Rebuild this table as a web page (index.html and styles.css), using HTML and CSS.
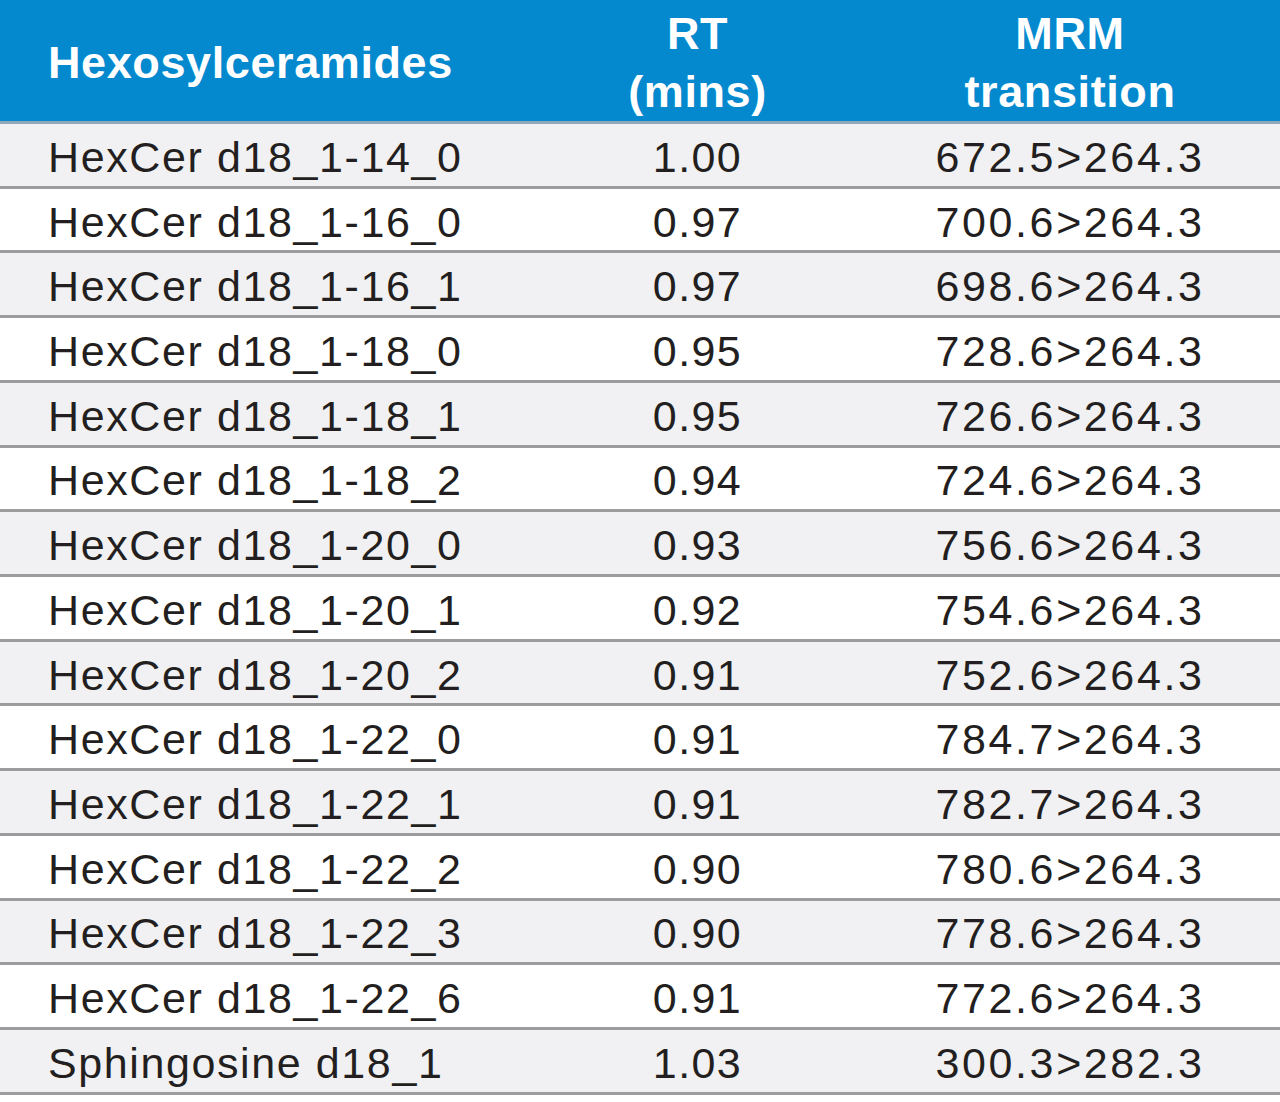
FILE: index.html
```html
<!DOCTYPE html>
<html>
<head>
<meta charset="utf-8">
<link rel="stylesheet" href="styles.css">
</head>
<body>
<div class="table">
  <div class="row head">
    <div class="c1">Hexosylceramides</div>
    <div class="c2">RT<br>(mins)</div>
    <div class="c3">MRM<br>transition</div>
  </div>
  <div class="row odd"><div class="c1">HexCer d18_1-14_0</div><div class="c2">1.00</div><div class="c3">672.5&gt;264.3</div></div>
  <div class="row"><div class="c1">HexCer d18_1-16_0</div><div class="c2">0.97</div><div class="c3">700.6&gt;264.3</div></div>
  <div class="row odd"><div class="c1">HexCer d18_1-16_1</div><div class="c2">0.97</div><div class="c3">698.6&gt;264.3</div></div>
  <div class="row"><div class="c1">HexCer d18_1-18_0</div><div class="c2">0.95</div><div class="c3">728.6&gt;264.3</div></div>
  <div class="row odd"><div class="c1">HexCer d18_1-18_1</div><div class="c2">0.95</div><div class="c3">726.6&gt;264.3</div></div>
  <div class="row"><div class="c1">HexCer d18_1-18_2</div><div class="c2">0.94</div><div class="c3">724.6&gt;264.3</div></div>
  <div class="row odd"><div class="c1">HexCer d18_1-20_0</div><div class="c2">0.93</div><div class="c3">756.6&gt;264.3</div></div>
  <div class="row"><div class="c1">HexCer d18_1-20_1</div><div class="c2">0.92</div><div class="c3">754.6&gt;264.3</div></div>
  <div class="row odd"><div class="c1">HexCer d18_1-20_2</div><div class="c2">0.91</div><div class="c3">752.6&gt;264.3</div></div>
  <div class="row"><div class="c1">HexCer d18_1-22_0</div><div class="c2">0.91</div><div class="c3">784.7&gt;264.3</div></div>
  <div class="row odd"><div class="c1">HexCer d18_1-22_1</div><div class="c2">0.91</div><div class="c3">782.7&gt;264.3</div></div>
  <div class="row"><div class="c1">HexCer d18_1-22_2</div><div class="c2">0.90</div><div class="c3">780.6&gt;264.3</div></div>
  <div class="row odd"><div class="c1">HexCer d18_1-22_3</div><div class="c2">0.90</div><div class="c3">778.6&gt;264.3</div></div>
  <div class="row"><div class="c1">HexCer d18_1-22_6</div><div class="c2">0.91</div><div class="c3">772.6&gt;264.3</div></div>
  <div class="row odd"><div class="c1">Sphingosine d18_1</div><div class="c2">1.03</div><div class="c3">300.3&gt;282.3</div></div>
</div>
</body>
</html>
```
FILE: styles.css
```css
html, body {
  margin: 0;
  padding: 0;
  background: #ffffff;
}
.table {
  width: 1280px;
  font-family: "Liberation Sans", Arial, sans-serif;
  color: #231f20;
}
.row {
  display: grid;
  grid-template-columns: 560px 275px 1fr;
  align-items: center;
  box-sizing: border-box;
  height: 64.73px;
  padding-top: 5px;
  border-bottom: 3px solid #9c9c9e;
  font-size: 43px;
  letter-spacing: 1.6px;
  background: #ffffff;
}
.row.odd {
  background: #f1f1f3;
}
.row.head {
  height: 124px;
  padding-top: 4px;
  background: #0489cf;
  color: #ffffff;
  font-weight: bold;
  font-size: 45px;
  letter-spacing: 0.6px;
  line-height: 58px;
  border-bottom: 3px solid #8fa9bb;
}
.c1 {
  padding-left: 48px;
  white-space: nowrap;
}
.c2 {
  text-align: center;
  letter-spacing: 1.4px;
}
.c3 {
  text-align: center;
  padding-left: 25px;
  letter-spacing: 2.6px;
}
.head .c2,
.head .c3 {
  letter-spacing: 0.6px;
}
```
